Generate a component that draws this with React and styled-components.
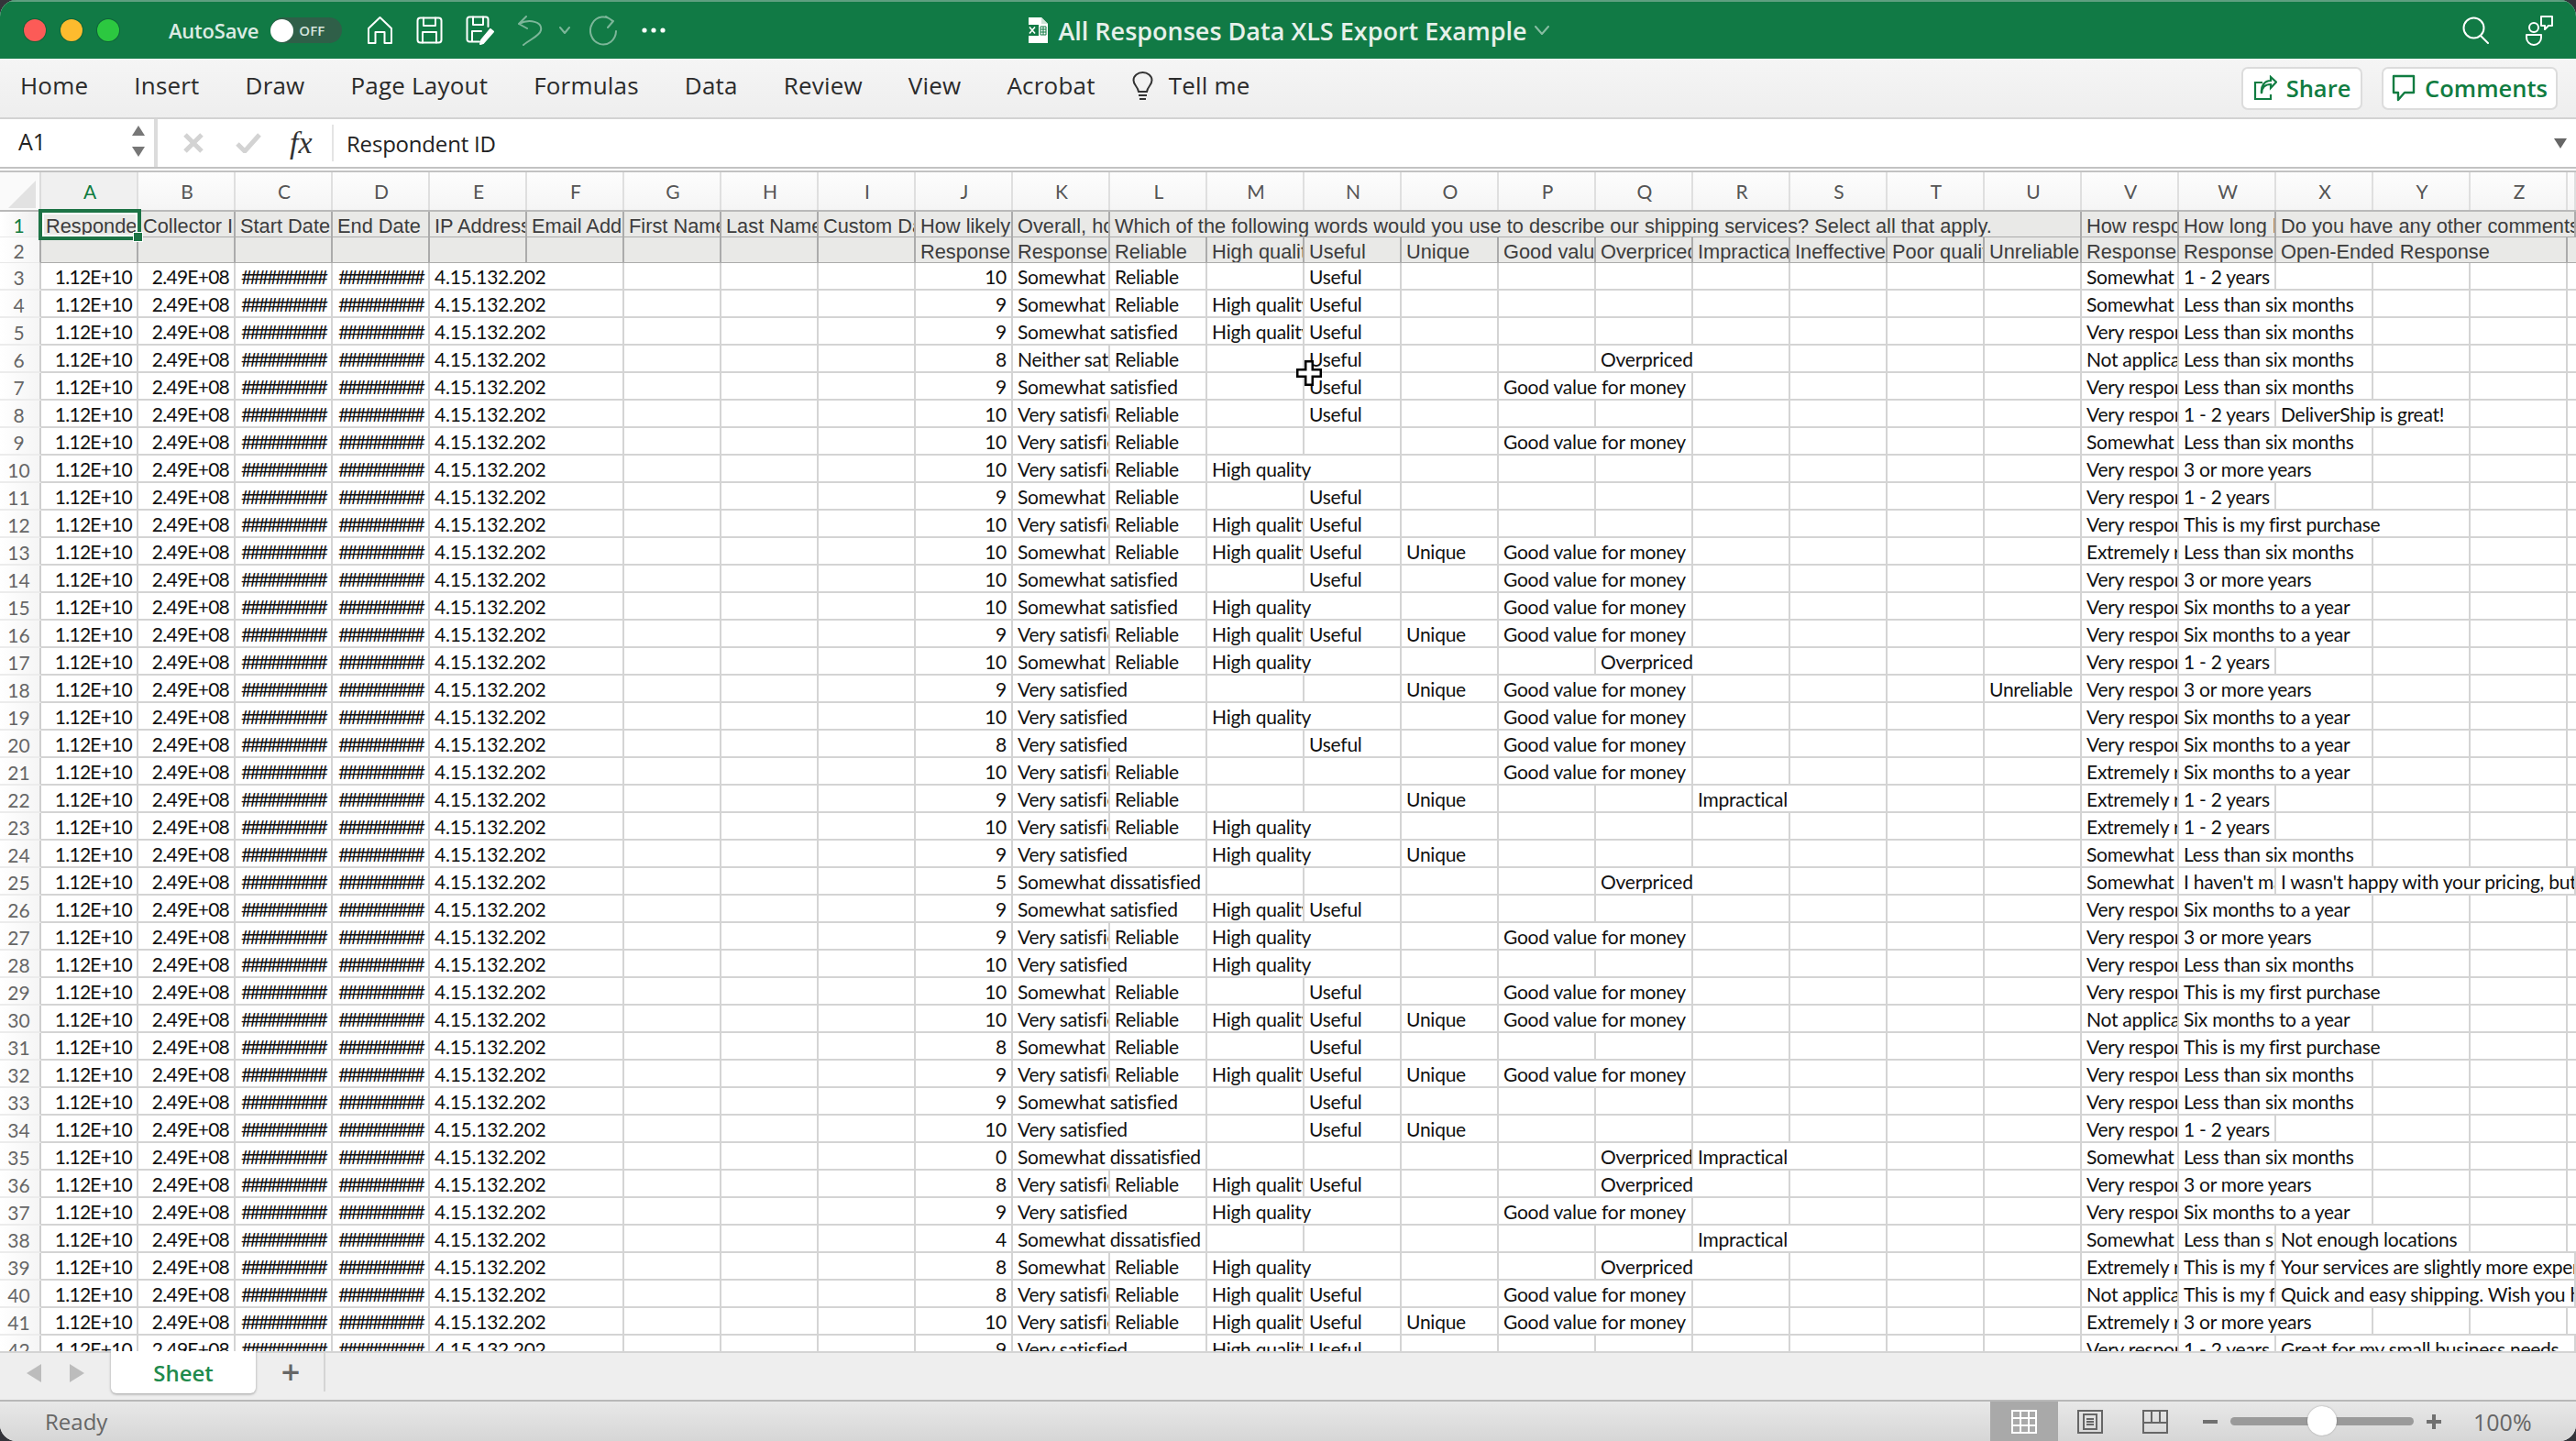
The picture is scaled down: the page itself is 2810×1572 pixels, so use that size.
import React from 'react';
import styled, { createGlobalStyle } from 'styled-components';

const CELL_FONT = '21px Lato';
const HEAD_FONT = '21.8px "Liberation Sans"';
const COL_W = 106;
const COLS = 'ABCDEFGHIJKLMNOPQRSTUVWXYZ'.split('').concat('AA');

const S = 'Somewhat satisfied';
const VS = 'Very satisfied';
const SD = 'Somewhat dissatisfied';
const RE = 'Reliable';
const HQ = 'High quality';
const US = 'Useful';
const UQ = 'Unique';
const GV = 'Good value for money';
const OP = 'Overpriced';
const IM = 'Impractical';
const SW = 'Somewhat responsive';
const VR = 'Very responsive';
const XR = 'Extremely responsive';
const NA = 'Not applicable';
const Y12 = '1 - 2 years';
const LT6 = 'Less than six months';
const Y3 = '3 or more years';
const M6 = 'Six months to a year';
const FP = 'This is my first purchase';

const HEAD_1 = {
  A: 'Respondent ID', B: 'Collector ID', C: 'Start Date', D: 'End Date', E: 'IP Address',
  F: 'Email Address', G: 'First Name', H: 'Last Name', I: 'Custom Data 1',
  J: 'How likely is it that you would recommend DeliverShip to a friend or colleague?',
  K: 'Overall, how satisfied or dissatisfied are you with our company?',
  L: 'Which of the following words would you use to describe our shipping services? Select all that apply.',
  V: 'How responsive have we been to your questions or concerns about our products?',
  W: 'How long have you been a customer of our company?',
  X: 'Do you have any other comments, questions, or concerns?',
};

const HEAD_2 = {
  J: 'Response', K: 'Response', L: RE, M: HQ, N: US, O: UQ, P: GV, Q: OP, R: IM,
  S: 'Ineffective', T: 'Poor quality', U: 'Unreliable', V: 'Response', W: 'Response',
  X: 'Open-Ended Response',
};

const ROWS = [
  { J: 10, K: S, L: RE, N: US, V: SW, W: Y12 },
  { J: 9, K: S, L: RE, M: HQ, N: US, V: SW, W: LT6 },
  { J: 9, K: S, M: HQ, N: US, V: VR, W: LT6 },
  { J: 8, K: 'Neither satisfied nor dissatisfied', L: RE, N: US, Q: OP, V: NA, W: LT6 },
  { J: 9, K: S, N: US, P: GV, V: VR, W: LT6 },
  { J: 10, K: VS, L: RE, N: US, V: VR, W: Y12, X: 'DeliverShip is great!' },
  { J: 10, K: VS, L: RE, P: GV, V: SW, W: LT6 },
  { J: 10, K: VS, L: RE, M: HQ, V: VR, W: Y3 },
  { J: 9, K: S, L: RE, N: US, V: VR, W: Y12 },
  { J: 10, K: VS, L: RE, M: HQ, N: US, V: VR, W: FP },
  { J: 10, K: S, L: RE, M: HQ, N: US, O: UQ, P: GV, V: XR, W: LT6 },
  { J: 10, K: S, N: US, P: GV, V: VR, W: Y3 },
  { J: 10, K: S, M: HQ, P: GV, V: VR, W: M6 },
  { J: 9, K: VS, L: RE, M: HQ, N: US, O: UQ, P: GV, V: VR, W: M6 },
  { J: 10, K: S, L: RE, M: HQ, Q: OP, V: VR, W: Y12 },
  { J: 9, K: VS, O: UQ, P: GV, U: 'Unreliable', V: VR, W: Y3 },
  { J: 10, K: VS, M: HQ, P: GV, V: VR, W: M6 },
  { J: 8, K: VS, N: US, P: GV, V: VR, W: M6 },
  { J: 10, K: VS, L: RE, P: GV, V: XR, W: M6 },
  { J: 9, K: VS, L: RE, O: UQ, R: IM, V: XR, W: Y12 },
  { J: 10, K: VS, L: RE, M: HQ, V: XR, W: Y12 },
  { J: 9, K: VS, M: HQ, O: UQ, V: SW, W: LT6 },
  { J: 5, K: SD, Q: OP, V: SW, W: "I haven't made a purchase yet", X: "I wasn't happy with your pricing, but the service itself was good" },
  { J: 9, K: S, M: HQ, N: US, V: VR, W: M6 },
  { J: 9, K: VS, L: RE, M: HQ, P: GV, V: VR, W: Y3 },
  { J: 10, K: VS, M: HQ, V: VR, W: LT6 },
  { J: 10, K: S, L: RE, N: US, P: GV, V: VR, W: FP },
  { J: 10, K: VS, L: RE, M: HQ, N: US, O: UQ, P: GV, V: NA, W: M6 },
  { J: 8, K: S, L: RE, N: US, V: VR, W: FP },
  { J: 9, K: VS, L: RE, M: HQ, N: US, O: UQ, P: GV, V: VR, W: LT6 },
  { J: 9, K: S, N: US, V: VR, W: LT6 },
  { J: 10, K: VS, N: US, O: UQ, V: VR, W: Y12 },
  { J: 0, K: SD, Q: OP, R: IM, V: SW, W: LT6 },
  { J: 8, K: VS, L: RE, M: HQ, N: US, Q: OP, V: VR, W: Y3 },
  { J: 9, K: VS, M: HQ, P: GV, V: VR, W: M6 },
  { J: 4, K: SD, R: IM, V: SW, W: LT6, X: 'Not enough locations' },
  { J: 8, K: S, L: RE, M: HQ, Q: OP, V: XR, W: FP, X: 'Your services are slightly more expensive than others I have used' },
  { J: 8, K: VS, L: RE, M: HQ, N: US, P: GV, V: NA, W: FP, X: 'Quick and easy shipping. Wish you had more locations' },
  { J: 10, K: VS, L: RE, M: HQ, N: US, O: UQ, P: GV, V: XR, W: Y3 },
  { J: 9, K: VS, M: HQ, N: US, V: VR, W: Y12, X: 'Great for my small business needs' },
];

const ctx = document.createElement('canvas').getContext('2d');

// how many columns a text runs over before the next filled cell stops it, like Excel does
const layoutRow = (row, font) => {
  const parts = [];
  ctx.font = font;
  for (let i = 0; i < COLS.length; ) {
    const col = COLS[i];
    const text = row[col];
    if (text === undefined) {
      parts.push({ col, span: 1 });
      i += 1;
      continue;
    }
    let next = i + 1;
    while (next < COLS.length && row[COLS[next]] === undefined) next += 1;
    const fixed = typeof text === 'number' || 'ABCD'.includes(col);
    const needed = Math.ceil((ctx.measureText(String(text)).width + 6) / COL_W);
    const span = fixed ? 1 : Math.min(needed, next - i);
    parts.push({ col, span, text, fixed });
    i += span;
  }
  return parts;
};

const bodyRow = (data) => ({
  ...data,
  A: '1.12E+10',
  B: '2.49E+08',
  C: '##########',
  D: '##########',
  E: '4.15.132.202',
});

const GlobalStyle = createGlobalStyle`
  html, body {
    margin: 0;
    height: 100%;
    background: #34343a;
    overflow: hidden;
  }
  * {
    box-sizing: border-box;
  }
`;

const Window = styled.div`
  height: 100vh;
  display: flex;
  flex-direction: column;
  border-radius: 18px;
  overflow: hidden;
  background: #fff;
  font-family: "Open Sans", sans-serif;
`;

const TitleBar = styled.header`
  height: 64px;
  flex: none;
  display: grid;
  grid-template-columns: 1fr auto 1fr;
  align-items: center;
  background: #117a45;
  border-top: 2px solid #5f9f80;
  color: #fff;
`;

const TitleLeft = styled.div`
  display: flex;
  align-items: center;
  padding-left: 26px;
`;

const Light = styled.span`
  width: 24px;
  height: 24px;
  border-radius: 50%;
  margin-right: 16px;
  background: ${(p) => p.$color};
  box-shadow: 0 0 0 1px rgba(0, 0, 0, 0.18);
`;

const AutoSave = styled.span`
  margin-left: 38px;
  font-size: 22px;
  font-weight: 600;
  letter-spacing: -0.2px;
  color: #dcebe3;
`;

const Toggle = styled.span`
  width: 78px;
  height: 28px;
  margin-left: 13px;
  display: flex;
  align-items: center;
  gap: 6px;
  border-radius: 14px;
  background: #2f5f48;
  font-size: 15px;
  font-weight: 600;
  color: #d5e4dc;
`;

const Knob = styled.span`
  width: 25px;
  height: 25px;
  border-radius: 50%;
  background: #fff;
`;

const BarIcon = styled.svg`
  flex: none;
  margin-left: ${(p) => p.$gap}px;
  opacity: ${(p) => p.$dim || 1};
  fill: none;
  stroke: #fff;
  stroke-width: 2;
  stroke-linejoin: round;
  stroke-linecap: round;
`;

const Title = styled.div`
  display: flex;
  align-items: center;
  font-size: 27px;
  font-weight: 600;
  color: #e6f0ea;
`;

const TitleDoc = styled.svg`
  margin-right: 10px;
`;

const TitleRight = styled.div`
  display: flex;
  align-items: center;
  justify-content: flex-end;
  padding-right: 24px;
`;

const Ribbon = styled.nav`
  height: 66px;
  flex: none;
  display: flex;
  align-items: center;
  gap: 50px;
  padding: 0 20px 0 22px;
  background: linear-gradient(#f5f5f5, #eeeeee);
  border-bottom: 2px solid #d3d3d3;
`;

const RibbonTab = styled.span`
  margin-bottom: 6px;
  font-size: 26px;
  letter-spacing: 0.2px;
  color: #2b2b2b;
`;

const TellMe = styled.span`
  display: flex;
  align-items: center;
  gap: 17px;
  margin: 0 0 6px -10px;
  font-size: 26px;
  letter-spacing: 0.2px;
  color: #2b2b2b;
`;

const RibbonActions = styled.div`
  margin-left: auto;
  display: flex;
  gap: 21px;
`;

const ActionButton = styled.button`
  height: 47px;
  width: ${(p) => p.$width}px;
  display: flex;
  align-items: center;
  justify-content: center;
  gap: 10px;
  padding: 0;
  background: #fff;
  border: 2px solid #dcdcdc;
  border-radius: 7px;
  font-family: inherit;
  font-size: 25.5px;
  font-weight: 600;
  color: #107c41;
`;

const FormulaBar = styled.div`
  height: 54px;
  flex: none;
  display: flex;
  background: #fff;
  border-bottom: 2px solid #c2c2c2;
`;

const NameBox = styled.div`
  width: 172px;
  flex: none;
  display: flex;
  align-items: center;
  justify-content: space-between;
  padding: 0 10px 4px 20px;
  border-right: 4px solid #dcdcdc;
  font-size: 25px;
  color: #222;
`;

const Spinner = styled.span`
  display: flex;
  flex-direction: column;
  gap: 12px;
`;

const Arrow = styled.span`
  width: 0;
  height: 0;
  border-left: 7px solid transparent;
  border-right: 7px solid transparent;
  border-${(p) => (p.$up ? 'bottom' : 'top')}: 11px solid #777;
`;

const FormulaIcons = styled.div`
  width: 190px;
  flex: none;
  display: flex;
  align-items: center;
  padding-left: 28px;
  gap: 35px;
`;

const CancelMark = styled.svg`
  fill: none;
  stroke: #d3d3d3;
  stroke-width: 5;
`;

const Fx = styled.span`
  font-family: "Liberation Serif", serif;
  font-style: italic;
  font-size: 34px;
  color: #333;
  margin-left: -4px;
`;

const FormulaText = styled.div`
  flex: 1;
  display: flex;
  align-items: center;
  padding-left: 14px;
  border-left: 2px solid #e4e4e4;
  margin: 6px 0;
  font-size: 24px;
  letter-spacing: -0.2px;
  color: #222;
`;

const FormulaDrop = styled.span`
  width: 0;
  height: 0;
  margin: 21px 10px 0 0;
  border-left: 7px solid transparent;
  border-right: 7px solid transparent;
  border-top: 11px solid #666;
`;

const SheetArea = styled.main`
  flex: 1;
  min-height: 0;
  position: relative;
  overflow: hidden;
  padding-top: 2px;
  background: #fff;
`;

const GridRow = styled.div`
  display: grid;
  grid-template-columns: 45px repeat(26, ${COL_W}px) 1fr;
  height: ${(p) => p.$height}px;
`;

const ColumnRow = styled(GridRow)`
  border-top: 2px solid #c2c2c2;
  border-bottom: 2px solid #b9b9b9;
`;

const Corner = styled.div`
  display: flex;
  align-items: flex-end;
  justify-content: flex-end;
  padding: 0 4px 2px 0;
  background: #fafafa;
  border-right: 2px solid #dcdcdc;
`;

const ColumnHead = styled.div`
  display: flex;
  align-items: center;
  justify-content: center;
  padding-left: 2px;
  background: ${(p) => (p.$active ? '#f0f0f0' : 'linear-gradient(#fdfdfd, #f5f5f5)')};
  border-right: 2px solid #dfdfdf;
  font-family: Lato, sans-serif;
  font-size: 21px;
  color: ${(p) => (p.$active ? '#107c41' : '#555')};
`;

const RowNumber = styled.div`
  display: flex;
  align-items: center;
  justify-content: center;
  background: linear-gradient(90deg, #ffffff, ${(p) => (p.$active ? '#eeeeee' : '#f5f5f5')});
  border-right: 2px solid ${(p) => (p.$head ? '#aaa' : '#cfcfcf')};
  border-bottom: 2px solid ${(p) => (p.$head ? '#e8e8e8' : '#ececec')};
  font-family: Lato, sans-serif;
  font-size: 21px;
  padding: 2px 2px 0 0;
  color: ${(p) => (p.$active ? '#107c41' : '#666')};
`;

const CELL_SPACING = { hash: '-3px', sci: '-0.75px', text: '-0.25px' };

const Cell = styled.div`
  grid-column: span ${(p) => p.$span};
  min-width: 0;
  padding: 0 5px;
  overflow: hidden;
  white-space: nowrap;
  text-align: ${(p) => p.$align};
  letter-spacing: ${(p) => CELL_SPACING[p.$kind]};
  line-height: 30px;
  font-family: Lato, sans-serif;
  font-size: 21px;
  color: #111;
  background: #fff;
  border-right: 2px solid #d4d4d4;
  border-bottom: 2px solid #d4d4d4;
`;

const HeadCell = styled.div`
  grid-column: span ${(p) => p.$span};
  min-width: 0;
  padding: 0 5px;
  overflow: hidden;
  white-space: nowrap;
  line-height: 32px;
  font-family: "Liberation Sans", sans-serif;
  font-size: 21.8px;
  color: #3c3c3c;
  background: #e9e9e7;
  border-right: 2px solid #ababab;
  border-bottom: 2px solid #ababab;
`;

const Selection = styled.div`
  position: absolute;
  left: 42px;
  top: 44px;
  width: 112px;
  height: 34px;
  border: 4px solid #1c7345;
  outline: 2px solid #fff;
  outline-offset: -6px;
`;

const SelectionHandle = styled.span`
  position: absolute;
  right: -6px;
  bottom: -6px;
  width: 11px;
  height: 11px;
  background: #1c7345;
  border: 1px solid #fff;
`;

const CrossCursor = styled.svg`
  position: absolute;
  left: 1413px;
  top: 208px;
`;

const SheetBar = styled.div`
  height: 53px;
  flex: none;
  display: flex;
  background: #eeeeee;
  border-top: 2px solid #d4d4d4;
`;

const SheetArrows = styled.div`
  width: 121px;
  display: flex;
  align-items: center;
  gap: 31px;
  padding: 0 0 8px 29px;
`;

const SheetArrow = styled.span`
  width: 0;
  height: 0;
  border-top: 10px solid transparent;
  border-bottom: 10px solid transparent;
  border-${(p) => (p.$left ? 'right' : 'left')}: 16px solid #bcbcbc;
`;

const SheetTab = styled.div`
  width: 158px;
  height: 46px;
  margin-top: -2px;
  display: flex;
  align-items: center;
  justify-content: center;
  background: #fff;
  border-radius: 0 0 6px 6px;
  box-shadow: 0 1px 3px rgba(0, 0, 0, 0.35);
  font-size: 24px;
  font-weight: 600;
  color: #1f8a4c;
`;

const AddSheet = styled.div`
  width: 76px;
  height: 42px;
  display: flex;
  align-items: center;
  justify-content: center;
  padding-left: 2px;
  border-right: 2px solid #d4d4d4;
  font-size: 36px;
  line-height: 1;
  font-weight: 600;
  color: #666;
`;

const StatusBar = styled.footer`
  height: 45px;
  flex: none;
  display: flex;
  align-items: center;
  padding-left: 49px;
  background: linear-gradient(#e8e8e8, #d6d6d6);
  border-top: 2px solid #b8b8b8;
  font-size: 24px;
  color: #666;
`;

const ViewButtons = styled.div`
  display: flex;
  align-self: stretch;
  margin-left: auto;
`;

const ViewButton = styled.div`
  width: ${(p) => p.$width}px;
  display: flex;
  align-items: center;
  justify-content: center;
  background: ${(p) => (p.$on ? '#a9a9a9' : 'transparent')};
`;

const ViewIcon = styled.svg`
  fill: none;
  stroke: ${(p) => (p.$on ? '#fff' : '#666')};
  stroke-width: 2;
`;

const Zoom = styled.div`
  display: flex;
  align-items: center;
  gap: 14px;
  margin-left: 16px;
`;

const ZoomSign = styled.span`
  width: 16px;
  height: 16px;
  position: relative;
  &::before,
  &::after {
    content: '';
    position: absolute;
    background: #707070;
  }
  &::before {
    left: 0;
    right: 0;
    top: 6px;
    height: 4px;
  }
  &::after {
    display: ${(p) => (p.$plus ? 'block' : 'none')};
    top: 0;
    bottom: 0;
    left: 6px;
    width: 4px;
  }
`;

const Track = styled.div`
  position: relative;
  width: 200px;
  height: 9px;
  border-radius: 5px;
  background: #9a9a9a;
`;

const Thumb = styled.span`
  position: absolute;
  left: 84px;
  top: -12px;
  width: 32px;
  height: 32px;
  border-radius: 50%;
  background: #fff;
  box-shadow: 0 0 2px rgba(0, 0, 0, 0.3);
`;

const Percent = styled.span`
  width: 147px;
  padding-left: 35px;
  font-size: 25px;
  color: #666;
`;

const cellAlign = (p) => {
  if (p.col === 'C' || p.col === 'D') return 'center';
  return p.fixed ? 'right' : 'left';
};

const cellKind = (p) => {
  if (p.col === 'C' || p.col === 'D') return 'hash';
  return p.col === 'A' || p.col === 'B' ? 'sci' : 'text';
};

const SheetRow = ({ number, parts }) => (
  <GridRow $height={30}>
    <RowNumber>{number}</RowNumber>
    {parts.map((p) => (
      <Cell key={p.col} $span={p.span} $align={cellAlign(p)} $kind={cellKind(p)}>
        {p.text}
      </Cell>
    ))}
  </GridRow>
);

const TitleHead = ({ number, parts, active }) => (
  <GridRow $height={28}>
    <RowNumber $active={active} $head>
      {number}
    </RowNumber>
    {parts.map((p) => (
      <HeadCell key={p.col} $span={p.span}>
        {p.text}
      </HeadCell>
    ))}
  </GridRow>
);

const App = () => {
  const head1 = layoutRow(HEAD_1, HEAD_FONT);
  const head2 = layoutRow(HEAD_2, HEAD_FONT);
  return (
    <Window>
      <GlobalStyle />
      <TitleBar>
        <TitleLeft>
          <Light $color="#fc5b57" />
          <Light $color="#fdbb2e" />
          <Light $color="#2cc840" />
          <AutoSave>AutoSave</AutoSave>
          <Toggle>
            <Knob />
            OFF
          </Toggle>
          <BarIcon $gap={27} width="29" height="32" viewBox="0 0 29 32">
            <path d="M14.5 2 L27 14 V30 H19.5 V18 H9.5 V30 H2 V14 Z" />
          </BarIcon>
          <BarIcon $gap={25} width="29" height="30" viewBox="0 0 29 30">
            <rect x="1.5" y="1.5" width="26" height="27" rx="3" />
            <path d="M8 1.5 V10 H21 V1.5 M7 28.5 V17 H22 V28.5" />
          </BarIcon>
          <BarIcon $gap={25} width="31" height="32" viewBox="0 0 31 32">
            <path d="M15 28.5 H4 a2.5 2.5 0 0 1 -2.5 -2.5 V4 a2.5 2.5 0 0 1 2.5 -2.5 H22 a2.5 2.5 0 0 1 2.5 2.5 V12" />
            <path d="M8 1.5 V10 H19 V1.5 M7 28 V17 H17" />
            <path d="M19 30 l-3 1 1 -4 L27 15 l3 2.5 Z" fill="#fff" />
          </BarIcon>
          <BarIcon $gap={25} $dim={0.45} width="29" height="34" viewBox="0 0 29 34">
            <path d="M2 10 L10 2 M2 10 L11 15 M2 10 C14 4 28 8 26 17 C25 23 14 27 7 33" />
          </BarIcon>
          <BarIcon $gap={17} $dim={0.45} width="12" height="8" viewBox="0 0 12 8">
            <path d="M1 1 L6 7 L11 1" />
          </BarIcon>
          <BarIcon $gap={19} $dim={0.45} width="34" height="34" viewBox="0 0 34 34">
            <path d="M27 7 A14 15 0 1 0 31 18 M20 2 L28 7 L22 14" />
          </BarIcon>
          <BarIcon $gap={25} width="26" height="6" viewBox="0 0 26 6">
            <circle cx="3" cy="3" r="1.6" fill="#fff" />
            <circle cx="13" cy="3" r="1.6" fill="#fff" />
            <circle cx="23" cy="3" r="1.6" fill="#fff" />
          </BarIcon>
        </TitleLeft>
        <Title>
          <TitleDoc width="24" height="30" viewBox="0 0 24 30">
            <path d="M2 1 H16 L23 8 V29 H2 Z" fill="#fff" />
            <path d="M16 1 L23 8 H16 Z" fill="#cfe3d7" />
            <rect x="0" y="9" width="13" height="12" fill="#117a45" />
            <path d="M3 11.5 L9 18.5 M9 11.5 L3 18.5" stroke="#fff" strokeWidth="1.6" />
            <path d="M15 11 H21 M15 14 H21 M15 17 H21 M15 20 H21 M15 11 V20 M18 11 V20 M21 11 V20" stroke="#117a45" strokeWidth="1" />
          </TitleDoc>
          All Responses Data XLS Export Example
          <BarIcon $gap={8} $dim={0.5} width="16" height="10" viewBox="0 0 16 10">
            <path d="M1 1 L8 9 L15 1" />
          </BarIcon>
        </Title>
        <TitleRight>
          <BarIcon $gap={0} width="30" height="30" viewBox="0 0 30 30">
            <circle cx="12.5" cy="12.5" r="11" />
            <path d="M20 21 L28 29" />
          </BarIcon>
          <BarIcon $gap={38} width="32" height="34" viewBox="0 0 32 34">
            <circle cx="10" cy="14" r="5" />
            <path d="M2 22 H18 V25 A8 8 0 0 1 2 25 Z" />
            <path d="M18 2 H30 V12 H26 L22 16 V12 H18 Z" />
          </BarIcon>
        </TitleRight>
      </TitleBar>

      <Ribbon>
        {['Home', 'Insert', 'Draw', 'Page Layout', 'Formulas', 'Data', 'Review', 'View', 'Acrobat'].map((t) => (
          <RibbonTab key={t}>{t}</RibbonTab>
        ))}
        <TellMe>
          <svg width="23" height="31" viewBox="0 0 23 31" fill="none" stroke="#333" strokeWidth="2">
            <path d="M7 22 C6 16 1.5 15 1.5 9.5 A10 8.5 0 0 1 21.5 9.5 C21.5 15 17 16 16 22 Z" />
            <path d="M7 26 H16 M8 30 H15" />
          </svg>
          Tell me
        </TellMe>
        <RibbonActions>
          <ActionButton $width={132}>
            <svg width="26" height="28" viewBox="0 0 26 28" fill="none" stroke="#107c41" strokeWidth="2.2">
              <path d="M10 8 H2 V26 H19 V21" />
              <path d="M9 20 C9 13 13 10 19 10 V14 L25 7.5 L19 2 V6 C12 6 8 12 9 20 Z" />
            </svg>
            Share
          </ActionButton>
          <ActionButton $width={192}>
            <svg width="26" height="30" viewBox="0 0 26 30" fill="none" stroke="#107c41" strokeWidth="2.4" strokeLinejoin="round">
              <path d="M2 2 H24 V20 H14 L7 28 V20 H2 Z" />
            </svg>
            Comments
          </ActionButton>
        </RibbonActions>
      </Ribbon>

      <FormulaBar>
        <NameBox>
          A1
          <Spinner>
            <Arrow $up />
            <Arrow />
          </Spinner>
        </NameBox>
        <FormulaIcons>
          <CancelMark width="22" height="22" viewBox="0 0 22 22">
            <path d="M2 2 L20 20 M20 2 L2 20" />
          </CancelMark>
          <CancelMark width="28" height="22" viewBox="0 0 28 22">
            <path d="M2 12 L10 20 L26 2" />
          </CancelMark>
          <Fx>fx</Fx>
        </FormulaIcons>
        <FormulaText>Respondent ID</FormulaText>
        <FormulaDrop />
      </FormulaBar>

      <SheetArea>
        <ColumnRow $height={45}>
          <Corner>
            <svg width="30" height="30" viewBox="0 0 30 30">
              <path d="M30 0 V30 H0 Z" fill="#e2e2e2" />
            </svg>
          </Corner>
          {COLS.map((c) => (
            <ColumnHead key={c} $active={c === 'A'}>
              {c === 'AA' ? '' : c}
            </ColumnHead>
          ))}
        </ColumnRow>
        <TitleHead number={1} parts={head1} active />
        <TitleHead number={2} parts={head2} />
        {ROWS.map((r, i) => (
          <SheetRow key={i} number={i + 3} parts={layoutRow(bodyRow(r), CELL_FONT)} />
        ))}
        <Selection>
          <SelectionHandle />
        </Selection>
        <CrossCursor width="30" height="30" viewBox="0 0 30 30">
          <path d="M10 1 H20 V10 H29 V20 H20 V29 H10 V20 H1 V10 H10 Z" fill="#000" />
          <path d="M12.5 3.5 H17.5 V12.5 H26.5 V17.5 H17.5 V26.5 H12.5 V17.5 H3.5 V12.5 H12.5 Z" fill="#fff" />
        </CrossCursor>
      </SheetArea>

      <SheetBar>
        <SheetArrows>
          <SheetArrow $left />
          <SheetArrow />
        </SheetArrows>
        <SheetTab>Sheet</SheetTab>
        <AddSheet>+</AddSheet>
      </SheetBar>

      <StatusBar>
        Ready
        <ViewButtons>
          <ViewButton $width={74} $on>
            <ViewIcon $on width="28" height="26" viewBox="0 0 28 26">
              <path d="M1 1 H27 V25 H1 Z M10 1 V25 M19 1 V25 M1 9 H27 M1 17 H27" />
            </ViewIcon>
          </ViewButton>
          <ViewButton $width={70}>
            <ViewIcon width="28" height="26" viewBox="0 0 28 26">
              <path d="M1 1 H27 V25 H1 Z M7 5 H21 V21 H7 Z M10 10 H18 M10 13 H18 M10 16 H18" />
            </ViewIcon>
          </ViewButton>
          <ViewButton $width={72}>
            <ViewIcon width="28" height="26" viewBox="0 0 28 26">
              <path d="M1 1 H27 V25 H1 Z M10 1 V14 M19 1 V14 M1 14 H27" />
            </ViewIcon>
          </ViewButton>
        </ViewButtons>
        <Zoom>
          <ZoomSign />
          <Track>
            <Thumb />
          </Track>
          <ZoomSign $plus />
        </Zoom>
        <Percent>100%</Percent>
      </StatusBar>
    </Window>
  );
};

export default App;
